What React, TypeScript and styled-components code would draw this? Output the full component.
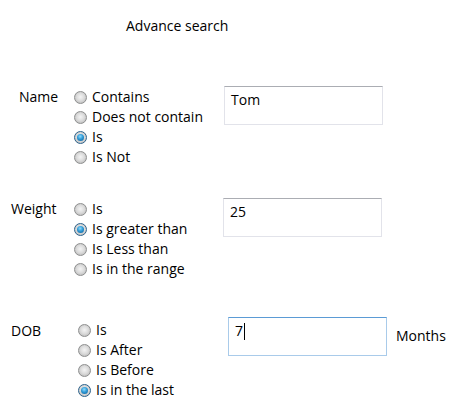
import React from "react";
import styled, { createGlobalStyle } from "styled-components";

const GlobalStyle = createGlobalStyle`
  html, body { margin: 0; padding: 0; background: #ffffff; }
  body {
    font-family: "Open Sans", "Noto Sans", "Liberation Sans", sans-serif;
    font-size: 14px;
    color: #000;
  }
`;

const Page = styled.div`
  width: 459px;
  height: 410px;
  overflow: hidden;
  display: flex;
  flex-direction: column;
`;

const Title = styled.div`
  margin-top: 16px;
  padding-left: 126px;
  height: 20px;
  line-height: 20px;
`;

const Section = styled.div<{ $top: number; $left: number }>`
  margin-top: ${(p) => p.$top}px;
  padding-left: ${(p) => p.$left}px;
  display: flex;
  align-items: flex-start;
`;

const Label = styled.div<{ $width: number; $offset: number }>`
  width: ${(p) => p.$width}px;
  margin-top: ${(p) => p.$offset}px;
  height: 20px;
  line-height: 20px;
  flex-shrink: 0;
`;

const Options = styled.div<{ $width: number; $offset: number }>`
  width: ${(p) => p.$width}px;
  margin-top: ${(p) => p.$offset}px;
  display: flex;
  flex-direction: column;
  flex-shrink: 0;
`;

const OptionRow = styled.div`
  height: 20px;
  line-height: 20px;
  display: flex;
  align-items: center;
  white-space: nowrap;
`;

const RadioDot = styled.span<{ $checked: boolean }>`
  box-sizing: border-box;
  width: 13px;
  height: 13px;
  border-radius: 50%;
  margin-right: 5px;
  flex-shrink: 0;
  border: 1px solid ${(p) => (p.$checked ? "#2c628b" : "#8e8f8f")};
  background: radial-gradient(circle at 50% 45%, #f4f4f4 0%, #dcdcdc 45%, #c4c4c4 75%, #e6e6e6 100%);
  display: flex;
  align-items: center;
  justify-content: center;
  &::after {
    content: "";
    display: ${(p) => (p.$checked ? "block" : "none")};
    width: 7px;
    height: 7px;
    border-radius: 50%;
    background: radial-gradient(circle at 45% 35%, #8fdcff 0%, #2f9ad6 45%, #0d5a93 100%);
  }
`;

const TextBox = styled.div<{ $focused?: boolean }>`
  box-sizing: border-box;
  width: 159px;
  height: 39px;
  padding: 3px 6px;
  line-height: 20px;
  background: #fff;
  border: 1px solid ${(p) => (p.$focused ? "#a9cbea" : "#e2e3ea")};
  border-top-color: ${(p) => (p.$focused ? "#5b9bd5" : "#abadb3")};
  flex-shrink: 0;
`;

const Caret = styled.span`
  display: inline-block;
  width: 1px;
  height: 17px;
  background: #000;
  vertical-align: -4px;
  margin-left: 1px;
`;

const Suffix = styled.div`
  margin-left: 9px;
  margin-top: 9px;
  line-height: 20px;
`;

type Opt = { text: string; checked?: boolean };

function Radio({ text, checked = false }: Opt) {
  return (
    <OptionRow>
      <RadioDot $checked={checked} />
      <span>{text}</span>
    </OptionRow>
  );
}

export default function App() {
  return (
    <Page>
      <GlobalStyle />
      <Title>Advance search</Title>

      <Section $top={50} $left={19}>
        <Label $width={55} $offset={1}>Name</Label>
        <Options $width={150} $offset={1}>
          <Radio text="Contains" />
          <Radio text="Does not contain" />
          <Radio text="Is" checked />
          <Radio text="Is Not" />
        </Options>
        <TextBox>Tom</TextBox>
      </Section>

      <Section $top={31} $left={11}>
        <Label $width={63} $offset={1}>Weight</Label>
        <Options $width={149} $offset={1}>
          <Radio text="Is" />
          <Radio text="Is greater than" checked />
          <Radio text="Is Less than" />
          <Radio text="Is in the range" />
        </Options>
        <TextBox>25</TextBox>
      </Section>

      <Section $top={38} $left={11}>
        <Label $width={67} $offset={4}>DOB</Label>
        <Options $width={150} $offset={3}>
          <Radio text="Is" />
          <Radio text="Is After" />
          <Radio text="Is Before" />
          <Radio text="Is in the last" checked />
        </Options>
        <TextBox $focused>
          7<Caret />
        </TextBox>
        <Suffix>Months</Suffix>
      </Section>
    </Page>
  );
}
